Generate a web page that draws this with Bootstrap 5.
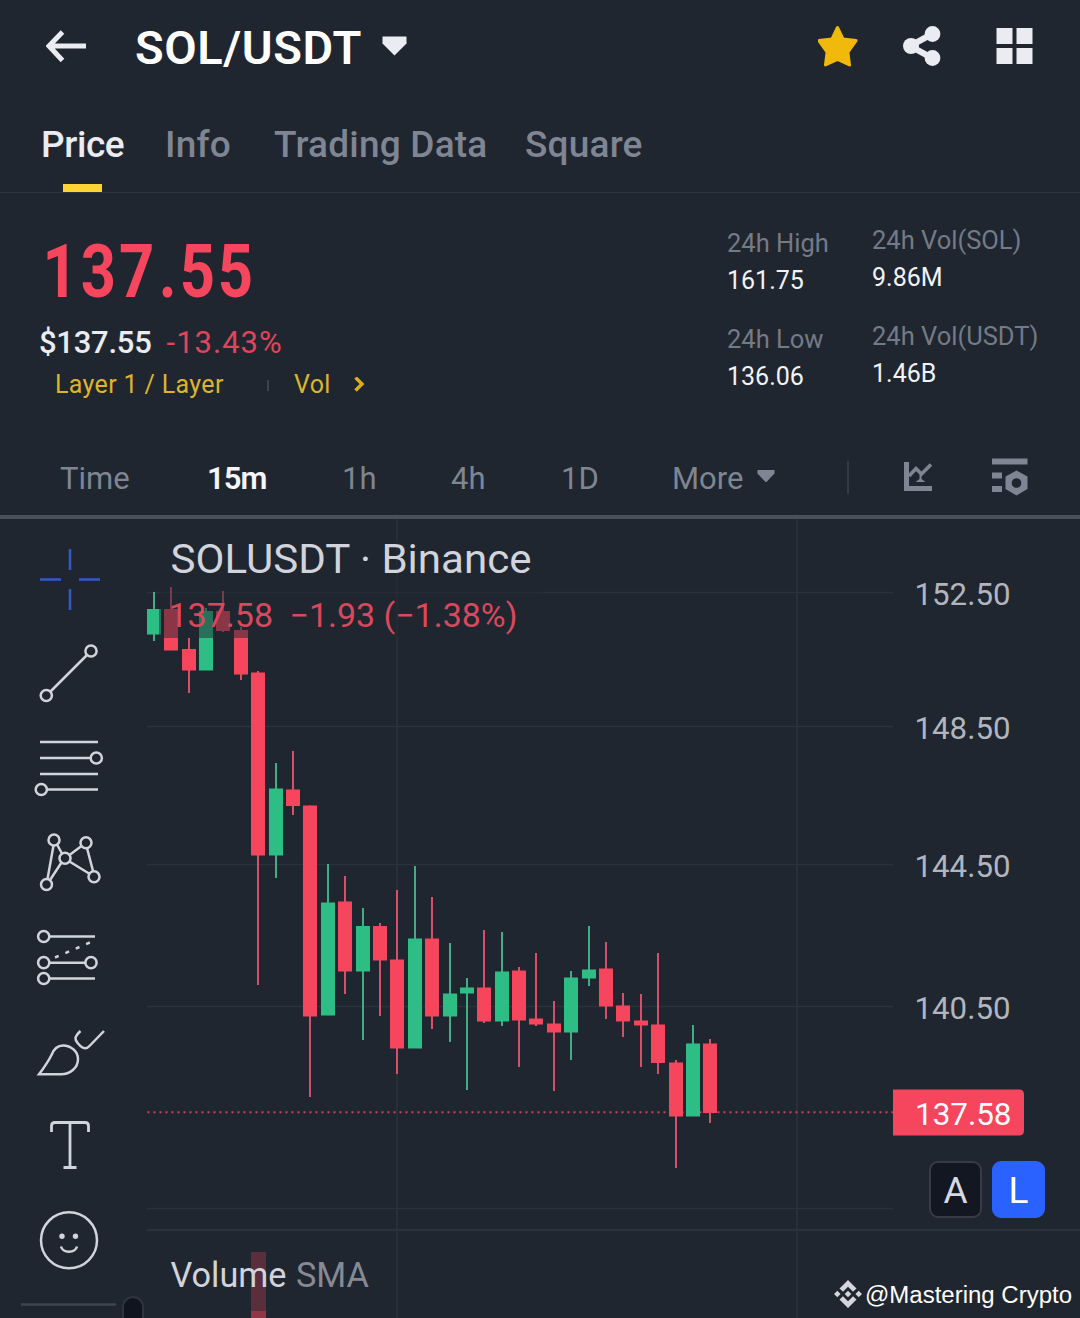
<!DOCTYPE html>
<html lang="en">
<head>
<meta charset="utf-8">
<meta name="viewport" content="width=device-width, initial-scale=1">
<title>SOL/USDT</title>
<link href="https://cdn.jsdelivr.net/npm/bootstrap@5.3.0/dist/css/bootstrap.min.css" rel="stylesheet">
<style>
  :root { --bg:#1f262f; --txt:#eaecf2; --dim:#7f8592; --red:#f6465d; --green:#2ebd85; --gold:#dcb52c; }
  body { background:var(--bg); color:var(--txt); font-family:Roboto, "Noto Sans", sans-serif; width:1080px; height:1318px; overflow:hidden; }
  svg { display:block; flex:none; }
  .topbar { height:92px; padding:0 47px 0 46px; }
  .pair { font-size:47px; font-weight:600; line-height:60px; color:#fff; margin-left:49px; padding-top:3px; width:247px; white-space:nowrap; letter-spacing:.6px; }
  .tabs { height:101px; border-bottom:1px solid #2c333d; display:grid; grid-template-columns:124px 109px 251px 1fr; padding-left:41px; }
  .tabs .tab-link { position:relative; color:var(--dim); font-size:37px; font-weight:500; line-height:94px; padding-top:6px; white-space:nowrap; letter-spacing:.2px; }
  .tabs .tab-link.active { color:var(--txt); letter-spacing:-.4px; }
  .tabs .tab-link.active::after { content:""; position:absolute; left:22px; bottom:0; width:39px; height:8px; background:#fcd535; }
  .summary { height:247px; padding:0 0 0 40px; }
  .quote { width:687px; padding-top:39px; }
  .bigprice { font-size:74px; line-height:80px; font-weight:700; color:var(--red); transform:scaleX(.83); transform-origin:0 0; letter-spacing:3.6px; padding-left:3px; }
  .bigprice span { padding:0 0 0 2px; }
  .subprice { font-size:31px; line-height:40px; margin-top:11px; font-weight:500; }
  .subprice .usd { letter-spacing:-.25px; margin-left:-1px; }
  .subprice .chg { color:#e0455b; margin-left:15px; letter-spacing:1px; font-weight:400; }
  .sectors { font-size:25px; line-height:30px; margin-top:7px; color:var(--gold); padding-left:15px; letter-spacing:.35px; }
  .sectors .layer-name { width:213px; }
  .sectors .sep { width:2px; height:11px; background:#3c434e; margin-left:-1px; }
  .stat { font-size:25.5px; line-height:38px; white-space:nowrap; }
  .stat dt { font-weight:400; color:#747a86; }
  .stat dd { margin:0 0 20px; font-size:25px; color:#f1f3f7; }
  .stat.first { width:145px; padding-top:31px; }
  .stat.second { padding-top:28px; }
  .frames { height:79px; border-bottom:4px solid #4a505b; display:grid; grid-template-columns:147px 135px 109px 110px 111px 85px 90px 56px 88px 1fr; align-items:center; padding:4px 0 0 60px; font-size:31px; color:var(--dim); white-space:nowrap; }
  .frames .on { color:#f4f5f9; font-weight:600; letter-spacing:-1px; }
  .frames .bar { width:2px; height:33px; background:#343b46; margin-top:-4px; }
  .tools { width:147px; padding-top:13px; }
  .tools svg { fill:none; stroke:#d1d4dc; stroke-width:2.5; }
  .plot { width:933px; height:799px; }
  .scale-btn { width:53px; height:57px; border-radius:9px; font-size:37px; line-height:1; border:2px solid #363b46; background:#131722; color:#d6d9e0; padding:2px 0 0; }
  .scale-btn.log { background:#2962ff; border-color:#2962ff; color:#fff; }
  .scale-row { position:absolute; left:929px; top:642px; gap:10px; }
</style>
<script src="https://cdn.jsdelivr.net/npm/bootstrap@5.3.0/dist/js/bootstrap.bundle.min.js"></script>
</head>
<body>
<header class="topbar d-flex align-items-center">
  <svg width="40" height="32" viewBox="46 30 40 32" fill="none" stroke="#eaecf2" stroke-width="5"><path d="M86 46H50M62.500 32L49 46l13.500 14.500"/></svg>
  <div class="pair">SOL/USDT</div>
  <svg width="25" height="20" viewBox="382 36 25 20"><path fill="#eaecf2" d="M382.500 36.500h24v7L394.500 55.500l-12-12z"/></svg>
  <svg class="ms-auto" width="40" height="42" viewBox="818 25 40 42"><path fill="#f0b90b" stroke="#f0b90b" stroke-width="3" stroke-linejoin="round" d="M837.500 27.500l5.600 11.600 13 1.500-8.200 11.400 1.600 13-12-5.500-12 5.500 1.600-13-8.200-11.400 13-1.500z"/></svg>
  <svg style="margin-left:45px" width="39" height="42" viewBox="903 25 39 42"><g fill="#eaecf2"><path d="M910 46l23-12.500M910 46l23 12.500" stroke="#eaecf2" stroke-width="6"/><circle cx="911" cy="46" r="8"/><circle cx="932.500" cy="34" r="7.900"/><circle cx="932.500" cy="58" r="7.900"/></g></svg>
  <svg style="margin-left:54px" width="37" height="36" viewBox="996 28 37 36"><path fill="#eaecf2" d="M996.500 28h16v16h-16zM1016.500 28h16v16h-16zM996.500 48h16v16h-16zM1016.500 48h16v16h-16z"/></svg>
</header>

<nav class="tabs"><span class="tab-link active">Price</span><span class="tab-link">Info</span><span class="tab-link">Trading Data</span><span class="tab-link">Square</span></nav>

<section class="summary d-flex">
  <div class="quote">
    <div class="bigprice">137<span>.</span>55</div>
    <div class="subprice d-flex"><span class="usd">$137.55</span><span class="chg">-13.43%</span></div>
    <div class="sectors d-flex align-items-center">
      <span class="layer-name">Layer 1 / Layer</span><span class="sep"></span><span style="margin-left:25px">Vol</span>
      <svg style="margin-left:22px" width="12" height="16" viewBox="353 376 12 16" fill="none" stroke="#dcae1c" stroke-width="3.400"><path d="M355.500 376.500l6.500 6.500-6.500 6.500"/></svg>
    </div>
  </div>
  <dl class="stat first mb-0"><dt>24h High</dt><dd>161.75</dd><dt>24h Low</dt><dd>136.06</dd></dl>
  <dl class="stat second mb-0"><dt>24h Vol(SOL)</dt><dd>9.86M</dd><dt>24h Vol(USDT)</dt><dd>1.46B</dd></dl>
</section>

<section class="frames">
  <span>Time</span><span class="on">15m</span><span>1h</span><span>4h</span><span>1D</span><span>More</span>
  <svg width="18" height="12" viewBox="757 469 18 12" style="margin-top:-7px"><path fill="#7f8592" d="M757.500 469h17v3.500L766 481.500l-8.500-9z"/></svg>
  <span class="bar"></span>
  <svg width="29" height="30" viewBox="903 461 29 30" style="margin-top:-6px"><path fill="#7f8592" d="M904 461h5v24h23v5h-28zM915.500 481l4-3v-5h2v5l4 3z"/><path d="M909 475l7-7.500 5.500 5.500L931 463.500" fill="none" stroke="#7f8592" stroke-width="3.600"/></svg>
  <svg width="37" height="38" viewBox="991 458 37 38" style="margin-top:-6px"><path fill="#7f8592" fill-rule="evenodd" d="M992 458.500h35.500v6H992zM992 472.500h10v6h-10zM992 486h10v6h-10zM1016.500 470.500l11 6v12.500l-11 6.500-11-6.500v-12.500zM1016.500 478.200a4.800 4.800 0 1 0 .01 0z"/></svg>
</section>

<main class="d-flex position-relative">
  <aside class="tools d-flex flex-column">
    <svg width="147" height="94" viewBox="0 532 147 94"><path stroke="#3059d0" stroke-width="2.600" d="M40 579.500h21M79 579.500h21M70 549v21M70 589v21"/></svg>
    <svg width="147" height="94" viewBox="0 626 147 94"><circle cx="91" cy="651" r="5.600"/><circle cx="46.300" cy="695.500" r="5.600"/><path d="M50.500 691.500L87 655"/></svg>
    <svg width="147" height="94" viewBox="0 720 147 94"><path d="M40 742h58M40 758h50M40 774h58M47 789.500h51"/><circle cx="96.300" cy="758" r="5.600"/><circle cx="41.300" cy="789.500" r="5.600"/></svg>
    <svg width="147" height="94" viewBox="0 814 147 94"><circle cx="54" cy="840" r="5.500"/><circle cx="86" cy="842.700" r="5.500"/><circle cx="65" cy="858.300" r="5.500"/><circle cx="94" cy="876.700" r="5.500"/><circle cx="46.500" cy="884.500" r="5.500"/><path d="M53.500 845.500L47.500 879M57 844.500L62 853.500M69.500 855L81.500 846M69.500 861.500L89 873.500M61.500 862.500L50 880M87 848L93 871"/></svg>
    <svg width="147" height="94" viewBox="0 908 147 94"><circle cx="43.700" cy="936.500" r="5.600"/><circle cx="43.700" cy="962.700" r="5.600"/><circle cx="91" cy="962.700" r="5.600"/><circle cx="43.700" cy="978.500" r="5.600"/><path d="M49.500 936.500H95M49.500 962.700H85M49.500 978.500H95"/><path d="M55 957.500L91 942" stroke-dasharray="4 7.300"/></svg>
    <svg width="147" height="96" viewBox="0 1002 147 96"><path d="M39 1074.300C46 1065 49 1060 51.500 1055C54 1048.500 58 1045.500 63 1045.500C71 1045.500 78 1051.500 78 1059C78 1068 70 1074.300 61 1074.300ZM80.500 1031C74 1037 74.500 1040 78 1043.500L80.500 1046.200C83.500 1049 87 1049 90 1045.500L104 1031"/></svg>
    <svg width="147" height="94" viewBox="0 1098 147 94"><path stroke-width="2.800" d="M51.500 1132v-6q0-3.500 3.500-3.500h30q3.500 0 3.500 3.500v6M70 1122.500v45M63.500 1167.500h13"/></svg>
    <svg width="147" height="94" viewBox="0 1192 147 94"><circle cx="69" cy="1240.300" r="28"/><path d="M61 1246.500c2 7 14 7 16 0"/><g fill="#d1d4dc" stroke="none"><circle cx="62" cy="1236.300" r="2.700"/><circle cx="75.500" cy="1236.300" r="2.700"/></g></svg>
    <svg width="147" height="32" viewBox="0 1286 147 32"><path stroke="#3f4550" d="M21 1304.500h95"/><path fill="#10141f" stroke="#2e3440" stroke-width="2" d="M123 1325v-18a10 10 0 0 1 20 0v18z"/></svg>
  </aside>

  <svg class="plot" viewBox="147 519 933 799" font-family="Roboto, sans-serif">
    <g stroke="#2b323c" stroke-width="1.600">
      <path d="M147 592.500H893M147 726.500H893M147 864.500H893M147 1006.500H893M147 1208.500H893M397 519V1318M797 519V1318"/>
      <path d="M147 1230H1080" stroke-width="2.400"/>
    </g>
    <path d="M147.500 1112.300H893" stroke="#c2485c" stroke-width="2" stroke-dasharray="2 4"/>
    <g id="candles"></g>
    <rect x="159" y="540" width="384" height="98" fill="#1f262f" fill-opacity=".5"/>
    <rect x="251" y="1252" width="15" height="66" fill="#f6465d" fill-opacity=".28"/>
    <rect x="251" y="1311" width="15" height="7" fill="#f6465d" fill-opacity=".35"/>
    <text x="170.500" y="573" font-size="41.500" fill="#d1d4dc" textLength="361" lengthAdjust="spacingAndGlyphs">SOLUSDT · Binance</text>
    <g font-size="32.500" fill="#d9485d">
      <text x="168.500" y="627" textLength="104.500" lengthAdjust="spacingAndGlyphs">137.58</text>
      <text x="289.500" y="627" textLength="228" lengthAdjust="spacingAndGlyphs">−1.93 (−1.38%)</text>
    </g>
    <text x="170.500" y="1286.500" font-size="34.500" fill="#d1d4dc" textLength="116" lengthAdjust="spacingAndGlyphs">Volume</text>
    <text x="296" y="1286.500" font-size="34.500" fill="#868a95" textLength="73" lengthAdjust="spacingAndGlyphs">SMA</text>
    <g font-size="31" fill="#b2b5be">
      <text x="914.500" y="604.500" textLength="96" lengthAdjust="spacingAndGlyphs">152.50</text>
      <text x="914.500" y="738.500" textLength="96" lengthAdjust="spacingAndGlyphs">148.50</text>
      <text x="914.500" y="876.500" textLength="96" lengthAdjust="spacingAndGlyphs">144.50</text>
      <text x="914.500" y="1018.500" textLength="96" lengthAdjust="spacingAndGlyphs">140.50</text>
    </g>
    <path fill="#f6465d" d="M893 1089.500h126q5 0 5 5v36q0 5-5 5H893z"/>
    <text x="915" y="1124.500" font-size="31" fill="#fff" textLength="96.500" lengthAdjust="spacingAndGlyphs">137.58</text>
    <g transform="translate(848 1294)" fill="#d3d6de">
      <path d="M0-14L8.500-5.500 5-2.200 0-7.200-5-2.200-8.500-5.500zM0 14L8.500 5.500 5 2.200 0 7.200-5 2.200-8.500 5.500zM0-3.300L3.300 0 0 3.300-3.300 0zM-10.700-3.300L-7.400 0l-3.300 3.300L-14 0zM10.700-3.300L14 0l-3.300 3.300L7.400 0z"/>
    </g>
    <text x="865" y="1302.500" font-size="23.500" fill="#fff" font-family="Liberation Sans, sans-serif" textLength="207" lengthAdjust="spacingAndGlyphs">@Mastering Crypto</text>
  </svg>

  <div class="scale-row d-flex">
    <button class="scale-btn">A</button><button class="scale-btn log">L</button>
  </div>
</main>

<script>
  // centre x, up (1) or down (0), body top, body bottom, wick top, wick bottom
  const candles = [
    [154,1,609,634.5,592,641],[171,0,609,650.5,587,650],[189,0,649,670.5,638,693],[206,1,611,670.5,608,670],
    [223,0,611,631,591,632],[241,0,630,674.5,627,680],[258,0,672.5,855.500,671,985],[276,1,788.5,855.5,763,878],
    [293,0,789.5,806,751,815],[310,0,805.5,1016.5,805.5,1097],[328,1,902.5,1015.5,864,1015],[345,0,901.5,971.5,876,994],
    [363,1,926,971.5,908,1040],[380,0,926,960.5,923,1016],[397,0,959.5,1048.5,890,1074],[415,1,938.5,1048.5,866,1048],
    [432,0,938.5,1016.5,897,1029],[450,1,993.5,1016.5,943,1042],[467,1,987.5,993.5,978,1090],[484,0,987.5,1021.5,930,1023],
    [502,1,971.5,1021.5,932,1026],[519,0,970.5,1020.5,967,1067],[536,0,1018.5,1024.5,953,1026],[554,0,1023.5,1032.5,1001,1091],
    [571,1,977.5,1032.5,971,1060],[589,1,969.5,978.5,926,986],[606,0,968.5,1006.5,942,1019],[623,0,1005.5,1021.5,993,1037],
    [641,0,1020.5,1025.5,994,1067],[658,0,1024.5,1063,953,1074],[676,0,1062.5,1116.5,1060,1168],[693,1,1043.5,1116.5,1025,1116],
    [710,0,1043.5,1113,1039,1123]
  ];
  document.getElementById('candles').innerHTML = candles.map(([x, up, t, b, wt, wb]) => {
    const body = up ? '#2ebd85' : '#f6465d', wick = up ? '#3fae84' : '#d6506a';
    return `<rect x="${x - 1}" y="${wt}" width="2" height="${wb - wt}" fill="${wick}"/><rect x="${x - 7}" y="${t}" width="14" height="${b - t}" fill="${body}"/>`;
  }).join('');
</script>
</body>
</html>
